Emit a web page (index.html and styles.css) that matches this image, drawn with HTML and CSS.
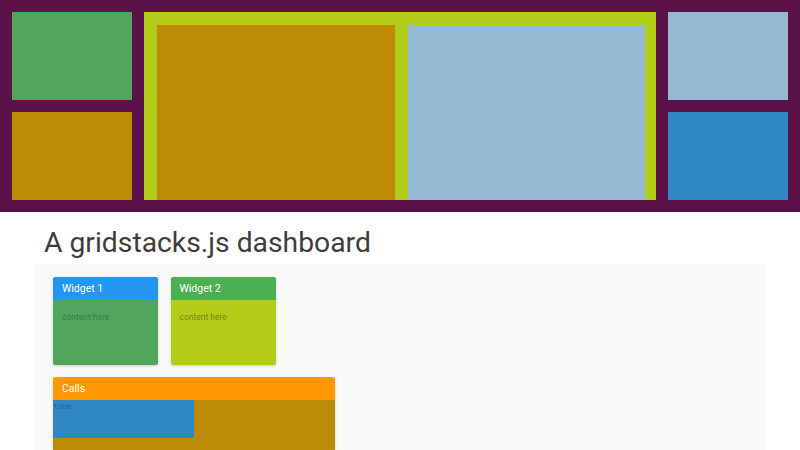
FILE: index.html
```html
<!DOCTYPE html>
<html>
<head>
<meta charset="utf-8">
<link rel="stylesheet" href="styles.css">
</head>
<body>
<div class="banner">
  <div class="col">
    <div class="tile green"></div>
    <div class="tile orange"></div>
  </div>
  <div class="center">
    <div class="tile orange"></div>
    <div class="tile light"></div>
  </div>
  <div class="col">
    <div class="tile light"></div>
    <div class="tile blue"></div>
  </div>
</div>
<h1 class="title">A gridstacks.js dashboard</h1>
<div class="panel">
  <div class="row">
    <div class="widget">
      <div class="whead head-blue">Widget 1</div>
      <div class="wbody body-green">content here</div>
    </div>
    <div class="widget">
      <div class="whead head-green">Widget 2</div>
      <div class="wbody body-lime">content here</div>
    </div>
  </div>
  <div class="widget calls">
    <div class="whead head-orange">Calls</div>
    <div class="cbody">
      <div class="total">Total</div>
    </div>
  </div>
</div>
</body>
</html>
```
FILE: styles.css
```css
html, body {
  margin: 0;
  padding: 0;
  background: #ffffff;
  font-family: Roboto, "Liberation Sans", sans-serif;
  overflow: hidden;
}
.banner {
  display: grid;
  grid-template-columns: 120px 1fr 120px;
  gap: 12px;
  padding: 12px;
  height: 188px;
  background: #5a1249;
}
.col {
  display: grid;
  grid-template-rows: 88px 88px;
  gap: 12px;
}
.center {
  display: grid;
  grid-template-columns: 1fr 1fr;
  gap: 13px;
  padding: 13px 11px 0 13px;
  background: #b3cb19;
}
.green { background: #51a55c; }
.orange { background: #be8b07; }
.light { background: #93bad1; }
.blue { background: #2f88c3; }

.title {
  margin: 11px 0 2px 44px;
  font-size: 28.3px;
  line-height: 40px;
  font-weight: 400;
  color: #3d3d3d;
}
.panel {
  margin: 0 35px;
  padding: 12px 18px 0;
  background: #f9f9f9;
  height: 173px;
}
.row {
  display: flex;
  gap: 12.5px;
  margin-bottom: 12px;
}
.widget {
  width: 105px;
  height: 88px;
  border-radius: 2px;
  overflow: hidden;
  display: flex;
  flex-direction: column;
  box-shadow: 0 1px 3px rgba(0,0,0,0.18);
}
.whead {
  height: 23px;
  line-height: 23px;
  padding-left: 9px;
  font-size: 10.5px;
  color: #ffffff;
}
.head-blue { background: #2196f3; }
.head-green { background: #4caf50; }
.head-orange { background: #ff9800; }
.wbody {
  flex: 1;
  padding: 12px 9px 0;
  font-size: 8.5px;
  color: rgba(0,0,0,0.3);
}
.body-green { background: #51a55c; }
.body-lime { background: #b3cb19; color: rgba(0,0,0,0.38); }
.calls {
  width: 282px;
  height: 73px;
  border-radius: 2px 2px 0 0;
}
.cbody {
  flex: 1;
  background: #be8b07;
}
.total {
  width: 141px;
  height: 38px;
  background: #2f88c3;
  font-size: 8px;
  line-height: 14px;
  color: rgba(0,0,0,0.3);
}
```
